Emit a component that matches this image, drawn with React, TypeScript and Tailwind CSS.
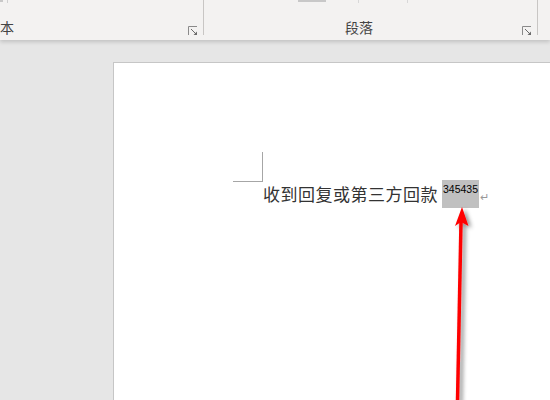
import React from "react";

const cjk = { fontFamily: '"Noto Sans CJK SC", "Noto Sans", sans-serif' };

function Launcher() {
  return (
    <svg width="10" height="10" viewBox="0 0 10 10" className="block">
      <path d="M0.5 9V0.5H9" fill="none" stroke="#8a8a8a" strokeWidth="1" />
      <path d="M3 3L8 8" stroke="#6b6b6b" strokeWidth="1" />
      <path d="M9 5.5V9H5.5Z" fill="#6b6b6b" />
    </svg>
  );
}

export default function App() {
  return (
    <div className="relative h-[400px] w-[550px] overflow-hidden bg-[#e6e6e6]" style={cjk}>
      {/* Ribbon (bottom edge of font / paragraph groups) */}
      <div className="relative flex h-[40px] bg-[#f3f2f1] shadow-[0_2px_4px_rgba(0,0,0,0.16)]">
        <div className="relative flex w-[203px] items-end pb-[4px]">
          <span className="text-[14px] leading-[18px] text-[#444]">本</span>
          <div className="absolute left-[0px] top-0 h-[2px] w-[3px] bg-[#c8c8c8]" />
          <div className="absolute left-[7px] top-0 h-[3px] w-px bg-[#d0d0d0]" />
          <div className="absolute right-[5px] top-[26px]">
            <Launcher />
          </div>
        </div>
        <div className="mb-[5px] w-px bg-[#c8c6c4]" />
        <div className="relative flex w-[333px] items-end pb-[4px] pl-[141px]">
          <span className="text-[14px] leading-[18px] text-[#444]">段落</span>
          <div className="absolute left-[94px] top-0 h-[2px] w-[28px] bg-[#c8c8c8]" />
          <div className="absolute left-[154px] top-0 h-[3px] w-px bg-[#d8d8d8]" />
          <div className="absolute left-[203px] top-0 h-[3px] w-px bg-[#d8d8d8]" />
          <div className="absolute right-[5px] top-[26px]">
            <Launcher />
          </div>
        </div>
        <div className="mb-[5px] w-px bg-[#c8c6c4]" />
      </div>

      {/* Document canvas */}
      <div className="pl-[113px] pt-[22px]">
        <div className="relative h-[360px] border-l border-t border-[#c6c6c6] bg-white pl-[119px] pt-[89px]">
          <div className="h-[30px] w-[30px] border-b border-r border-[#a6a6a6]" />
          <div className="-mt-[2px] ml-[30px] flex items-center">
            <span className="text-[17px] leading-[28px] text-[#333]" style={{ letterSpacing: "0.5px" }}>
              收到回复或第三方回款
            </span>
            <span className="ml-[4px] flex h-[28px] items-start bg-[#c0c0c0] px-[1px] pt-[3px]">
              <span className="text-[10.5px] leading-[12px] text-black" style={{ fontFamily: '"Liberation Sans", Arial, sans-serif' }}>
                345435
              </span>
            </span>
            <span className="ml-[1px] mt-[4px] text-[11px] leading-[12px] text-[#999]">↵</span>
          </div>
        </div>
      </div>

      {/* Red annotation arrow */}
      <svg className="absolute left-0 top-0" width="550" height="400" viewBox="0 0 550 400">
        <defs>
          <filter id="sh" x="-50%" y="-10%" width="200%" height="120%">
            <feDropShadow dx="3" dy="2" stdDeviation="2" floodColor="#000" floodOpacity="0.45" />
          </filter>
        </defs>
        <g filter="url(#sh)">
          <path d="M457.5 402L461 222" stroke="#ff0000" strokeWidth="3.5" fill="none" />
          <path d="M462 207L468.5 226L461 222L455 226Z" fill="#ff0000" />
        </g>
      </svg>
    </div>
  );
}
